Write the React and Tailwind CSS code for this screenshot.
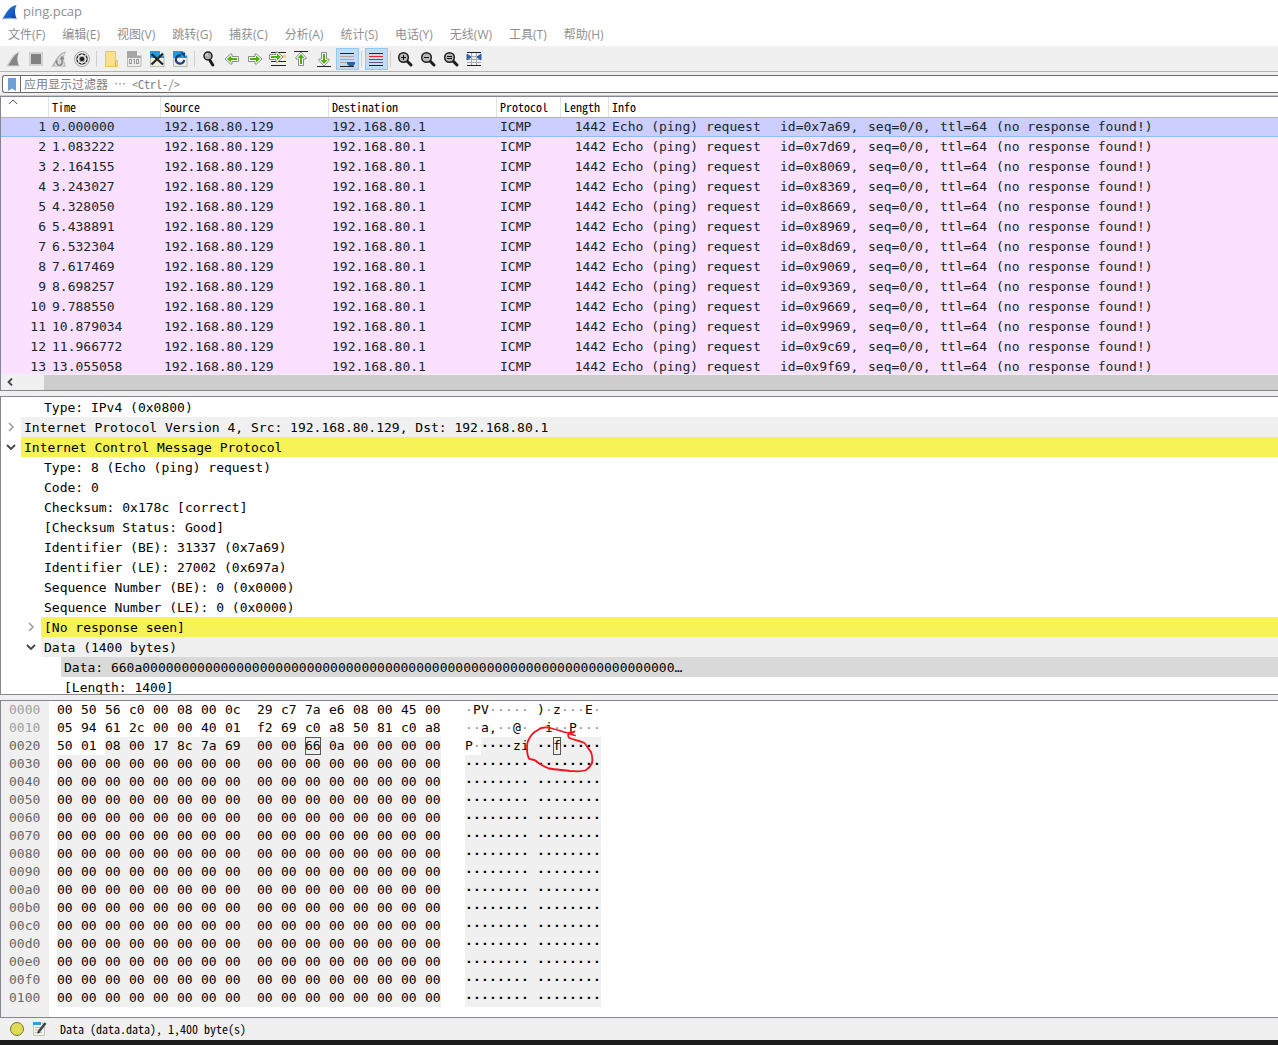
import React, { useState } from "react";
import clsx from "clsx";

const menus = [
  "文件(F)",
  "编辑(E)",
  "视图(V)",
  "跳转(G)",
  "捕获(C)",
  "分析(A)",
  "统计(S)",
  "电话(Y)",
  "无线(W)",
  "工具(T)",
  "帮助(H)",
];

const packets = [
  ["0.000000", "0x7a69"],
  ["1.083222", "0x7d69"],
  ["2.164155", "0x8069"],
  ["3.243027", "0x8369"],
  ["4.328050", "0x8669"],
  ["5.438891", "0x8969"],
  ["6.532304", "0x8d69"],
  ["7.617469", "0x9069"],
  ["8.698257", "0x9369"],
  ["9.788550", "0x9669"],
  ["10.879034", "0x9969"],
  ["11.966772", "0x9c69"],
  ["13.055058", "0x9f69"],
];

const details = [
  { level: 1, text: "Type: IPv4 (0x0800)" },
  {
    level: 0,
    text: "Internet Protocol Version 4, Src: 192.168.80.129, Dst: 192.168.80.1",
    toggle: "closed",
    tone: "header",
  },
  { level: 0, text: "Internet Control Message Protocol", toggle: "open", tone: "warn" },
  { level: 1, text: "Type: 8 (Echo (ping) request)" },
  { level: 1, text: "Code: 0" },
  { level: 1, text: "Checksum: 0x178c [correct]" },
  { level: 1, text: "[Checksum Status: Good]" },
  { level: 1, text: "Identifier (BE): 31337 (0x7a69)" },
  { level: 1, text: "Identifier (LE): 27002 (0x697a)" },
  { level: 1, text: "Sequence Number (BE): 0 (0x0000)" },
  { level: 1, text: "Sequence Number (LE): 0 (0x0000)" },
  { level: 1, text: "[No response seen]", toggle: "closed", tone: "warn" },
  { level: 1, text: "Data (1400 bytes)", toggle: "open", tone: "header" },
  { level: 2, text: `Data: 660a${"0".repeat(68)}…`, tone: "selected" },
  { level: 2, text: "[Length: 1400]" },
];

const zeros = Array(16).fill("00");

const hexRows = [
  {
    bytes: "00 50 56 c0 00 08 00 0c 29 c7 7a e6 08 00 45 00".split(" "),
    ascii: "·PV·····)·z···E·",
  },
  {
    bytes: "05 94 61 2c 00 00 40 01 f2 69 c0 a8 50 81 c0 a8".split(" "),
    ascii: "··a,··@··i··P···",
  },
  {
    bytes: "50 01 08 00 17 8c 7a 69 00 00 66 0a 00 00 00 00".split(" "),
    ascii: "P·····zi··f·····",
  },
  ...Array.from({ length: 14 }, () => ({ bytes: zeros, ascii: "·".repeat(16) })),
];

const SELECT_FROM = 34;
const CURSOR = 42;

/* Toolbar icons */

const FIN = "M1.5 16.5C5 13 7 3 16 1.5C13 6 13.5 11 16 16.5Z";

const Icon = ({ children }) => (
  <svg viewBox="0 0 19 18" className="h-[18px] w-[19px]" aria-hidden="true">
    {children}
  </svg>
);

const FinIcon = () => (
  <Icon>
    <path d={FIN} fill="#d4d4d4" />
    <path d="M4 15.5C7 12 8.500 5.500 14.500 3C12.500 7 13 11 14.500 15.500Z" fill="#858585" />
  </Icon>
);

const StopIcon = () => (
  <Icon>
    <rect x="2" y="2" width="14" height="14" fill="#d2d2d2" />
    <rect x="4" y="4" width="10" height="10" fill="#828282" />
  </Icon>
);

const RestartIcon = () => (
  <Icon>
    <path d={FIN} fill="#a9a9a9" />
    <path d="M3.500 15.700C7 12 8 5 14.600 2.800C12.600 7 13 11 14.700 15.700Z" fill="#dcdcdc" />
    <path d="M12 8.500v3a2.700 2.700 0 1 1-4.500-1" fill="none" stroke="#8c8c8c" strokeWidth="1.500" />
    <path d="M9.500 9.500l2.500-4 2.500 4z" fill="#8c8c8c" />
  </Icon>
);

const GearIcon = () => (
  <Icon>
    <circle cx="9" cy="9" r="7.500" fill="#f5f5f5" stroke="#a0a0a0" />
    <circle cx="9" cy="9" r="5.800" fill="#2b2b2b" />
    <circle cx="9" cy="9" r="3.600" fill="none" stroke="#f2f2f2" strokeWidth="1.500" />
    <path
      d="M9 3.800v10.400M3.800 9h10.400M5.300 5.300l7.400 7.400M12.700 5.300l-7.400 7.400"
      stroke="#f2f2f2"
      strokeWidth="1.200"
    />
    <circle cx="9" cy="9" r="2.300" fill="#222" />
  </Icon>
);

const FolderIcon = () => (
  <Icon>
    <path d="M3.500 1.500h10v9h2v6h-12z" fill="#ffe08a" stroke="#efc455" />
    <path d="M13.500 11v5" stroke="#d9a935" />
  </Icon>
);

const FileBase = ({ top, fill }) => (
  <>
    <path d="M2.500 1.500h9.500l4 4v11H2.500z" fill={fill} stroke="#b9b9b0" />
    <path d="M2 1h10l4 4v3H2z" fill={top} />
    <path d="M12 1v4.500h4.500z" fill="#fafafa" />
  </>
);

const SaveIcon = () => (
  <Icon>
    <FileBase top="#a6a6a6" fill="#ececec" />
    <g fill="none" stroke="#9a9a9a">
      <rect x="4.500" y="9.500" width="2" height="4" />
      <path d="M9.500 9v5M8 9.500h1" />
      <rect x="11.500" y="9.500" width="2" height="4" />
    </g>
  </Icon>
);

const CloseFileIcon = () => (
  <Icon>
    <FileBase top="#1e9be0" fill="#eeefdc" />
    <path d="M3.500 4l11.500 10.500M15 3.500L3.500 14.500" stroke="#222" strokeWidth="2.200" />
  </Icon>
);

const ReloadIcon = () => (
  <Icon>
    <FileBase top="#1e9be0" fill="#eeefdc" />
    <path d="M13.200 10A4.200 4.200 0 1 1 10 5.400" fill="none" stroke="#173f7e" strokeWidth="2.200" />
    <path d="M9 2.500h5v5z" fill="#173f7e" />
  </Icon>
);

const FindIcon = () => (
  <Icon>
    <circle cx="8" cy="6" r="4" fill="#aaa" stroke="#1c1c1c" strokeWidth="1.500" />
    <path d="M6 6a2.200 2.200 0 0 1 2-2.200" fill="none" stroke="#eee" />
    <path d="M10 10.500l2.800 4.500" stroke="#1c1c1c" strokeWidth="3" strokeLinecap="round" />
  </Icon>
);

const Arrow = ({ transform }) => (
  <g transform={transform}>
    <path
      d="M2.500 6.500h6.500v-2.500h1.500l5.500 5-5.500 5H9v-2.500H2.500z"
      fill="#fff"
      stroke="#8a8a8a"
      strokeLinejoin="round"
    />
    <path d="M4 8h6V5.500L14 9l-4 3.500V10H4z" fill="#4db00f" />
  </g>
);

const BackIcon = () => (
  <Icon>
    <Arrow transform="rotate(180 9 9)" />
  </Icon>
);

const ForwardIcon = () => (
  <Icon>
    <Arrow />
  </Icon>
);

const GotoIcon = () => (
  <Icon>
    <path d="M2 2.500h15M2 11.500h15M2 15.500h15" stroke="#222" />
    <path d="M12 6.500h5" stroke="#f3dc4a" strokeWidth="3" />
    <Arrow transform="translate(-2 -2)" />
  </Icon>
);

const FirstIcon = () => (
  <Icon>
    <path d="M2 1.500h14" stroke="#222" />
    <Arrow transform="rotate(-90 9 9)" />
  </Icon>
);

const LastIcon = () => (
  <Icon>
    <path d="M2 16.500h14" stroke="#222" />
    <Arrow transform="rotate(90 9 9)" />
  </Icon>
);

const AutoScrollIcon = () => (
  <Icon>
    <path d="M2 3.500h14M2 16.500h14" stroke="#222" />
    <path d="M2 6.500h14M2 9.500h14M2 12.500h7" stroke="#aaa9a0" />
    <path d="M9 12h8v2l-2 2h-4l-2-2z" fill="#2d5fa8" />
  </Icon>
);

const ColorizeIcon = () => (
  <Icon>
    <path d="M2 3.500h14M2 15.500h14" stroke="#222" />
    <path d="M2 6.500h14" stroke="#ee2222" />
    <path d="M2 9.500h14" stroke="#3465a4" />
    <path d="M2 12.500h14" stroke="#75507b" />
  </Icon>
);

const ZoomIcon = ({ sign }) => (
  <Icon>
    <path d="M11 11l4 4" stroke="#1c1c1c" strokeWidth="3" strokeLinecap="round" />
    <circle cx="7.500" cy="7.500" r="4.800" fill="#b8b8b8" stroke="#1c1c1c" strokeWidth="1.500" />
    <path d={sign} stroke="#111" />
  </Icon>
);

const ResizeIcon = () => (
  <Icon>
    <path d="M2 2.500h14M2 15.500h14" stroke="#222" />
    <path d="M2 6.500h14M2 9.500h14M2 12.500h14M6.500 3v12M11.500 3v12" stroke="#aaa" />
    <path d="M2 4l4 3-4 3zM16 4l-4 3 4 3z" fill="#2d5fa8" stroke="#2d5fa8" />
  </Icon>
);

const toolbar = [
  [
    ["Start capture", <FinIcon />],
    ["Stop capture", <StopIcon />],
    ["Restart capture", <RestartIcon />],
    ["Capture options", <GearIcon />],
  ],
  [
    ["Open", <FolderIcon />],
    ["Save", <SaveIcon />],
    ["Close file", <CloseFileIcon />],
    ["Reload", <ReloadIcon />],
  ],
  [
    ["Find packet", <FindIcon />],
    ["Previous packet", <BackIcon />],
    ["Next packet", <ForwardIcon />],
    ["Go to packet", <GotoIcon />],
    ["First packet", <FirstIcon />],
    ["Last packet", <LastIcon />],
    ["Auto scroll", <AutoScrollIcon />, true],
  ],
  [["Colorize", <ColorizeIcon />, true]],
  [
    ["Zoom in", <ZoomIcon sign="M5 7.500h5M7.500 5v5" />],
    ["Zoom out", <ZoomIcon sign="M5 7.500h5" />],
    ["Normal size", <ZoomIcon sign="M5 6.500h5M5 8.500h5" />],
    ["Resize columns", <ResizeIcon />],
  ],
];

const Toolbar = () => (
  <div className="flex h-[25px] items-center border-b border-[#b4b4b4] bg-[#f0f0f0] pl-0.5">
    {toolbar.map((group, i) => (
      <div key={i} className="flex items-center">
        {i > 0 && <span className="mx-[2px] h-4 w-0.5 border-l border-[#cfcfcf]" />}
        {group.map(([label, icon, active]) => (
          <button
            key={label}
            type="button"
            aria-label={label}
            className={clsx(
              "flex h-[22px] w-[23px] items-center justify-center border",
              active ? "border-[#90c8f6] bg-[#c0dcf3]" : "border-transparent"
            )}
          >
            {icon}
          </button>
        ))}
      </div>
    ))}
  </div>
);

const FilterBar = () => {
  const [filter, setFilter] = useState("");

  return (
    <div className="border-b border-[#c8c8c8] bg-[#f0f0f0] pt-[3px] pb-0.5 pl-0.5">
      <div className="flex h-[18px] rounded-l-[3px] border-y border-l border-[#6a6a6a] bg-white">
        <button
          type="button"
          aria-label="Bookmarks"
          className="flex w-[18px] items-center justify-center border-r border-[#6a6a6a]"
        >
          <svg viewBox="0 0 8 13" className="h-[13px] w-2" aria-hidden="true">
            <path d="M0 0h8v13L4 10.500 0 13z" fill="#6f9fd4" />
          </svg>
        </button>
        <input
          type="text"
          aria-label="应用显示过滤器"
          placeholder="应用显示过滤器 ⋯ <Ctrl-/>"
          value={filter}
          onChange={(e) => setFilter(e.target.value)}
          className='min-w-0 flex-1 bg-white px-[3px] font-["Noto_Sans_Mono_CJK_SC","Noto_Sans_CJK_SC",monospace] text-[12px] leading-4 placeholder:text-[#808080] focus:outline-none'
        />
      </div>
    </div>
  );
};

const PacketList = () => (
  <div className="border-y border-l border-[#828790] bg-white">
    <div className="h-[277px] overflow-hidden">
      <table className="w-full table-fixed border-separate border-spacing-0">
        <colgroup>
          <col className="w-[48px]" />
          <col className="w-[112px]" />
          <col className="w-[168px]" />
          <col className="w-[168px]" />
          <col className="w-[64px]" />
          <col className="w-[48px]" />
          <col />
        </colgroup>
        <thead className='text-left font-["Noto_Sans_Mono_CJK_SC","Noto_Sans_CJK_SC",monospace] text-[12px] leading-5 text-black'>
          <tr className="h-5 *:p-0 *:pl-[3px] *:font-normal">
            <th className="border-r border-[#e2e2e2]">
              <svg viewBox="0 0 10 6" className="mb-2.5 ml-1 h-1.5 w-2.5" aria-label="Sorted ascending">
                <path d="M1 5l4-4 4 4" fill="none" stroke="#555" />
              </svg>
            </th>
            <th className="border-r border-[#e2e2e2]">Time</th>
            <th className="border-r border-[#e2e2e2]">Source</th>
            <th className="border-r border-[#e2e2e2]">Destination</th>
            <th className="border-r border-[#e2e2e2]">Protocol</th>
            <th className="border-r border-[#e2e2e2]">Length</th>
            <th>Info</th>
          </tr>
        </thead>
        <tbody>
          {packets.map(([time, id], i) => (
            <tr
              key={id}
              className={clsx(
                "h-5 whitespace-pre text-[#12272e] *:border-y *:p-0 *:pl-[3px] *:leading-[18px]",
                i === 0
                  ? "bg-[#cbceff] *:border-[#8fbcf8]"
                  : "bg-[#fce0ff] *:border-transparent"
              )}
            >
              <td>
                <div className="pr-[3px] text-right">{i + 1}</div>
              </td>
              <td>{time}</td>
              <td>192.168.80.129</td>
              <td>192.168.80.1</td>
              <td>ICMP</td>
              <td>
                <div className="pr-[3px] text-right">1442</div>
              </td>
              <td>
                <div className="flex">
                  <span className="w-[168px]">Echo (ping) request</span>
                  <span className="w-[88px]">id={id},</span>
                  <span className="w-[72px]">seq=0/0,</span>
                  <span className="w-[56px]">ttl=64</span>
                  <span>(no response found!)</span>
                </div>
              </td>
            </tr>
          ))}
        </tbody>
      </table>
    </div>
    <div className="flex h-4 items-center bg-[#f0f0f0]">
      <button type="button" aria-label="Scroll left" className="flex w-[17px] justify-center">
        <svg viewBox="0 0 8 8" className="h-2 w-2" aria-hidden="true">
          <path d="M6 .5L2.500 4 6 7.500" fill="none" stroke="#444" strokeWidth="1.800" />
        </svg>
      </button>
      <div className="ml-[26px] h-[15px] flex-1 bg-[#cdcdcd]" />
    </div>
  </div>
);

const Chevron = ({ state }) => (
  <svg viewBox="0 0 10 10" className="h-2.5 w-2.5" aria-hidden="true">
    {state === "open" ? (
      <path d="M1 3l4 4 4-4" fill="none" stroke="#444" strokeWidth="1.800" />
    ) : (
      <path d="M3 1l4 4-4 4" fill="none" stroke="#a0a0a0" strokeWidth="1.600" />
    )}
  </svg>
);

const PacketDetails = () => (
  <div className="border-y border-l border-[#828790] bg-white">
    <ul className="h-[297px] overflow-hidden whitespace-pre text-black">
      {details.map((row) => (
        <li
          key={row.text}
          className={clsx("flex h-5 leading-[22px]", {
            "pl-5": row.level === 1,
            "pl-10": row.level === 2,
          })}
        >
          <span className="flex w-5 shrink-0 items-center justify-center">
            {row.toggle && (
              <button type="button" aria-label={row.text}>
                <Chevron state={row.toggle} />
              </button>
            )}
          </span>
          <span
            className={clsx("flex-1 pl-[3px]", {
              "bg-[#f0f0f0]": row.tone === "header",
              "bg-[#f7f255]": row.tone === "warn",
              "bg-[#d9d9d9]": row.tone === "selected",
            })}
          >
            {row.text}
          </span>
        </li>
      ))}
    </ul>
  </div>
);

const HexRow = ({ row, index }) => {
  const start = index * 16;

  return (
    <tr className="h-[18px] leading-[18px] *:p-0">
      <th
        scope="row"
        className={clsx(
          "w-12 bg-[#f0f0f0] pl-2! text-left font-normal",
          index < 2 ? "text-[#a0a0a0]" : "text-[#666]"
        )}
      >
        {start.toString(16).padStart(4, "0")}
      </th>
      <td className="w-2" />
      {row.bytes.map((byte, i) => (
        <td
          key={i}
          className={clsx(
            i === 7 ? "w-8" : i === 15 ? "w-4" : "w-6",
            start + i >= SELECT_FROM && "bg-[#f0f0f0]"
          )}
        >
          <span
            className={clsx(
              "block w-4",
              start + i === CURSOR && "outline -outline-offset-1 outline-[#555]"
            )}
          >
            {byte}
          </span>
        </td>
      ))}
      <td className="w-6" />
      {row.ascii.split("").map((char, i) => (
        <td
          key={i}
          className={clsx(
            i === 7 ? "w-4" : "w-2",
            start + i >= SELECT_FROM ? "bg-[#f0f0f0]" : char === "·" && "text-[#909090]",
            start + i >= SELECT_FROM && char === "·" && "font-bold"
          )}
        >
          <span
            className={clsx(
              "block w-2",
              start + i === CURSOR && "outline -outline-offset-1 outline-[#555]"
            )}
          >
            {char}
          </span>
        </td>
      ))}
    </tr>
  );
};

const PacketBytes = () => (
  <div className="relative flex flex-1 flex-col border-y border-l border-[#828790] bg-white">
    <table className="w-[600px] table-fixed border-collapse whitespace-pre text-black">
      <tbody>
        {hexRows.map((row, i) => (
          <HexRow key={i} row={row} index={i} />
        ))}
      </tbody>
    </table>
    <div className="w-12 flex-1 bg-[#f0f0f0]" />
    {/* Hand-drawn marker around the payload bytes */}
    <svg
      viewBox="523 724 74 52"
      className="absolute left-[522px] top-[23px] h-[52px] w-[74px]"
      aria-hidden="true"
    >
      <path
        d="M575 735.500L568.500 733.500C568 735 568 737 569.500 738C574 740 581 741 584.500 743C587 746 589 750 591 752C592.500 756 592.500 760 592 763C590 767 588 769 585 770.500C580 772 575 771 570 771C562 770 555 769.500 549 768.500C543 766 538 763 536 761C534 759 531 760 529 758.500C527 755 527 751 527 748C527 744 527.500 741 529 739C531 735 534 732 537 730.500C540 728 544 727 548 727.500C554 729 559 730.500 564 732C568 733 572 734 574.500 731.500"
        fill="none"
        stroke="#f5101c"
        strokeWidth="1.800"
        strokeLinecap="round"
        strokeLinejoin="round"
      />
    </svg>
  </div>
);

const StatusBar = () => (
  <div className='flex h-[22px] items-center bg-[#f0f0f0] pl-[9px] font-["Noto_Sans_Mono_CJK_SC","Noto_Sans_CJK_SC",monospace] text-[12px] text-black'>
    <button type="button" aria-label="Expert information">
      <svg viewBox="0 0 16 16" className="h-4 w-4" aria-hidden="true">
        <circle cx="8" cy="8" r="6.500" fill="#dedb57" stroke="#77762f" />
      </svg>
    </button>
    <button type="button" aria-label="Capture file comment" className="ml-[7px]">
      <svg viewBox="0 0 16 16" className="h-4 w-4" aria-hidden="true">
        <path d="M1.500 1.500h8l3 3v10h-11z" fill="#f4f4ee" stroke="#c4c4bc" />
        <path d="M1 1h8v3H1z" fill="#2f9fe0" />
        <path d="M3 6.500h6M3 9h5M3 11.500h7" stroke="#b5bcc4" />
        <path d="M13.500 2L6.500 11" stroke="#444" strokeWidth="2.600" />
        <path d="M5.500 12.800l.3-2.600 2 1.500z" fill="#222" />
      </svg>
    </button>
    <span className="ml-3">Data (data.data), 1,400 byte(s)</span>
  </div>
);

export default function App() {
  return (
    <div className='flex min-h-screen flex-col overflow-x-hidden bg-[#f0f0f0] font-["DejaVu_Sans_Mono",monospace] text-[13px]'>
      {/* Title bar */}
      <header className='bg-white font-["Open_Sans","Noto_Sans_CJK_SC",sans-serif] text-[12px] text-[#8f8f8f]'>
        <div className="flex h-6 items-center gap-1 pl-0.5">
          <svg viewBox="0 0 18 18" className="h-[18px] w-[17px]" aria-hidden="true">
            <defs>
              <linearGradient id="fin" x1="0" y1="0" x2="1" y2="1">
                <stop offset="0" stopColor="#2f86ea" />
                <stop offset="1" stopColor="#0a3fb0" />
              </linearGradient>
            </defs>
            <path d="M.5 16C4 12 6 3 15.500 1.500C13 6 13.500 11 15.500 16Z" fill="url(#fin)" />
            <path d="M0 16.500Q8 14.500 16 16.500" fill="none" stroke="#8fb4e0" />
          </svg>
          <h1 className="text-[13px]">ping.pcap</h1>
        </div>
        <nav className="flex h-[23px] items-center gap-[17px] border-b border-[#f0f0f0] pl-2">
          {menus.map((menu) => (
            <button key={menu} type="button" className="whitespace-nowrap">
              {menu}
            </button>
          ))}
        </nav>
      </header>
      <Toolbar />
      <FilterBar />
      <main className="flex flex-1 flex-col gap-[5px]">
        <PacketList />
        <PacketDetails />
        <PacketBytes />
      </main>
      <StatusBar />
      <footer className="h-[5px] bg-[#1b1b1b]" />
    </div>
  );
}
